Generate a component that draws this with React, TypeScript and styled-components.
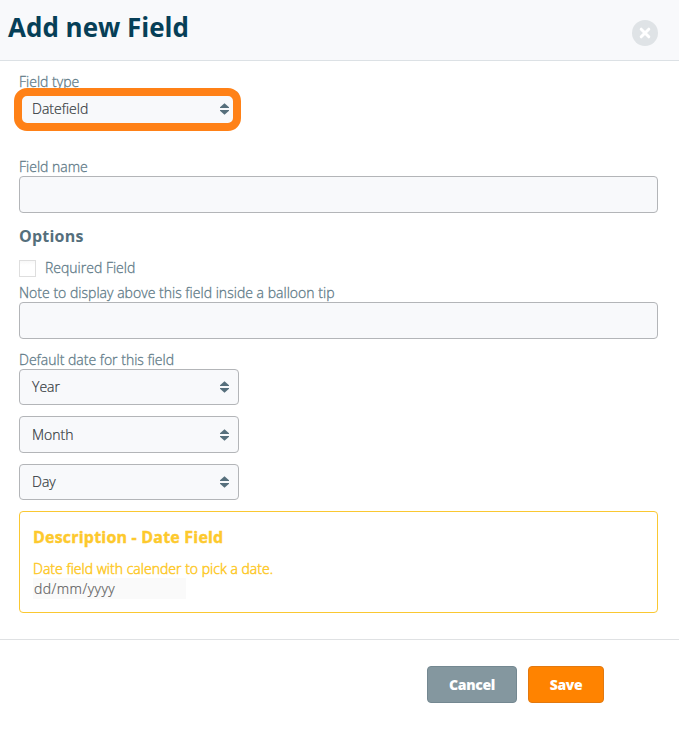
import React from 'react';
import styled, { createGlobalStyle } from 'styled-components';

const GlobalStyle = createGlobalStyle`
  *, *::before, *::after { box-sizing: border-box; }
  body {
    margin: 0;
    background: #fff;
    font-family: "Open Sans", "Noto Sans", sans-serif;
    font-size: 14px;
    color: #5f7b88;
  }
`;

const Dialog = styled.div`
  width: 100%;
  height: 729px;
  display: flex;
  flex-direction: column;
  background: #fff;
`;

const Header = styled.header`
  height: 61px;
  flex: none;
  display: flex;
  justify-content: space-between;
  align-items: flex-start;
  padding: 7px 21px 0 8px;
  background: #f8f9fb;
  border-bottom: 1px solid #dce1e5;
`;

const Title = styled.h1`
  margin: 0;
  font-size: 26px;
  line-height: 40px;
  font-weight: 700;
  color: #063f57;
`;

const CloseButton = styled.button`
  width: 26px;
  height: 26px;
  margin-top: 13px;
  padding: 0;
  border: 0;
  border-radius: 50%;
  background: #dfe3e6;
  display: flex;
  align-items: center;
  justify-content: center;
`;

const Body = styled.main`
  height: 578px;
  flex: none;
  padding: 10px 21px 0 19px;
`;

const Field = styled.div<{ $gap: number }>`
  display: flex;
  flex-direction: column;
  align-items: flex-start;
  margin-bottom: ${(p) => p.$gap}px;
`;

const Label = styled.label<{ $height?: number; $lineHeight?: number; $spacing?: number }>`
  height: ${(p) => p.$height ?? 20}px;
  line-height: ${(p) => p.$lineHeight ?? 22}px;
  font-weight: 300;
  white-space: nowrap;
  letter-spacing: ${(p) => p.$spacing ?? 0}px;
  -webkit-text-stroke: 0.3px currentColor;
`;

const TextInput = styled.input`
  width: 100%;
  height: 37px;
  padding: 0 12px;
  border: 1px solid #b3b5b8;
  border-radius: 4px;
  background: #f8f9fb;
  font: inherit;
`;

const SelectBox = styled.div<{ $height?: number }>`
  position: relative;
  width: 220px;
  height: ${(p) => p.$height ?? 36}px;
  display: flex;
  align-items: center;
  justify-content: space-between;
  padding: 0 9px 0 12px;
  border: 1px solid #b3b5b8;
  border-radius: 4px;
  background: #f8f9fb;
  color: #32383c;
  font-weight: 300;
  -webkit-text-stroke: 0.2px currentColor;
`;

const SelectValue = styled.span`
  line-height: 19px;
  padding-bottom: 1px;
`;

const Highlight = styled.span`
  position: absolute;
  left: -6px;
  top: -4px;
  width: 227px;
  height: 43px;
  border: 8px solid #ff8117;
  border-radius: 13px;
`;

const DateSelects = styled.div`
  display: flex;
  flex-direction: column;
  gap: 11px;
`;

const SectionTitle = styled.h2`
  margin: 0 0 12px;
  font-size: 16px;
  line-height: 24px;
  font-weight: 700;
  letter-spacing: 0.22px;
  color: #556f7c;
`;

const CheckRow = styled.div`
  height: 17px;
  display: flex;
  align-items: center;
  gap: 9px;
  margin-bottom: 6px;
`;

const Checkbox = styled.span`
  width: 17px;
  height: 17px;
  border: 1px solid #dedede;
  background: linear-gradient(#f8f8f8, #fff 4px);
`;

const Description = styled.section`
  height: 102px;
  padding: 13px;
  border: 1px solid #fac832;
  border-radius: 4px;
  color: #fdc92c;
`;

const DescriptionTitle = styled.h3`
  margin: 0 0 9px;
  font-size: 16px;
  line-height: 24px;
  font-weight: 700;
  letter-spacing: 0.2px;
  -webkit-text-stroke: 0.4px currentColor;
`;

const DescriptionText = styled.p`
  margin: 0;
  height: 20px;
  line-height: 22px;
  font-weight: 300;
  white-space: nowrap;
  letter-spacing: 0.02px;
  -webkit-text-stroke: 0.5px currentColor;
`;

const DateValue = styled.div`
  width: 153px;
  height: 21px;
  padding-left: 1px;
  line-height: 21px;
  background: #fafafa;
  color: #606060;
  font-weight: 300;
  letter-spacing: 0.45px;
  -webkit-text-stroke: 0.2px currentColor;
`;

const Footer = styled.footer`
  flex: 1;
  display: flex;
  justify-content: flex-end;
  align-items: flex-start;
  gap: 11px;
  padding: 26px 75px 0 0;
  border-top: 1px solid #dfe1e3;
`;

const Button = styled.button<{ $primary?: boolean }>`
  width: ${(p) => (p.$primary ? 76 : 90)}px;
  height: 37px;
  padding: 0;
  border: 1px solid ${(p) => (p.$primary ? '#e27910' : '#748891')};
  border-radius: 4px;
  background: ${(p) => (p.$primary ? '#ff8300' : '#84979f')};
  color: #fff;
  font: 800 14px "Open Sans", sans-serif;
  letter-spacing: -0.35px;
`;

const SortArrows = () => (
  <svg width="9" height="12" viewBox="0 0 9 12" fill="#566f7c" aria-hidden="true">
    <path d="M4.5 0.3 9 4.3V5H0v-.7zM4.5 11.7 0 7.7V7h9v.7z" />
  </svg>
);

const Select = ({ value, height, highlighted }: { value: string; height?: number; highlighted?: boolean }) => (
  <SelectBox $height={height}>
    <SelectValue>{value}</SelectValue>
    <SortArrows />
    {highlighted && <Highlight />}
  </SelectBox>
);

export default function App() {
  return (
    <>
      <GlobalStyle />
      <Dialog>
        <Header>
          <Title>Add new Field</Title>
          <CloseButton aria-label="Close">
            <svg width="12" height="12" viewBox="0 0 12 12" fill="none" stroke="#fff" strokeWidth="3" strokeLinecap="round">
              <path d="m2.2 2.2 7.6 7.6m0-7.6-7.6 7.6" />
            </svg>
          </CloseButton>
        </Header>
        <Body>
          <Field $gap={29}>
            <Label>Field type</Label>
            <Select value="Datefield" highlighted />
          </Field>
          <Field $gap={11}>
            <Label>Field name</Label>
            <TextInput />
          </Field>
          <SectionTitle>Options</SectionTitle>
          <CheckRow>
            <Checkbox />
            <Label $lineHeight={18}>Required Field</Label>
          </CheckRow>
          <Field $gap={10}>
            <Label $height={19} $lineHeight={20} $spacing={0.02}>Note to display above this field inside a balloon tip</Label>
            <TextInput />
          </Field>
          <Field $gap={11}>
            <Label>Default date for this field</Label>
            <DateSelects>
              <Select value="Year" />
              <Select value="Month" height={37} />
              <Select value="Day" />
            </DateSelects>
          </Field>
          <Description>
            <DescriptionTitle>Description - Date Field</DescriptionTitle>
            <DescriptionText>Date field with calender to pick a date.</DescriptionText>
            <DateValue>dd/mm/yyyy</DateValue>
          </Description>
        </Body>
        <Footer>
          <Button>Cancel</Button>
          <Button $primary>Save</Button>
        </Footer>
      </Dialog>
    </>
  );
}
